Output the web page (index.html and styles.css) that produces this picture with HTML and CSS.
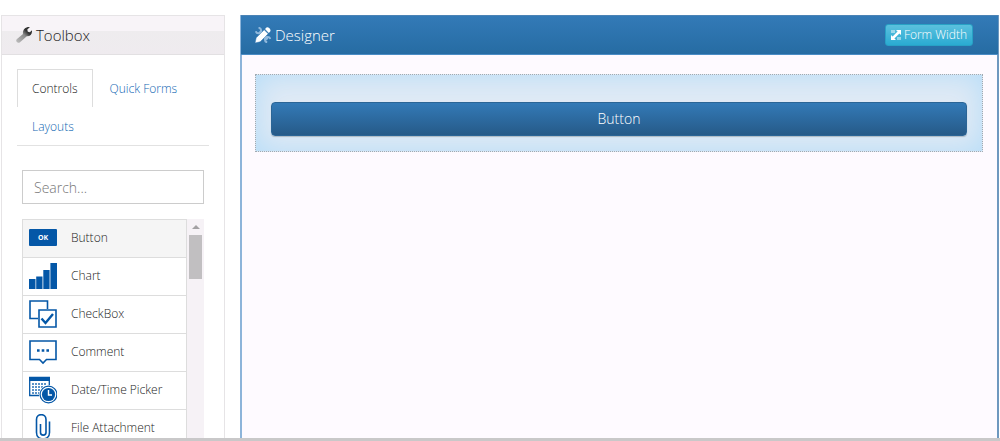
FILE: index.html
```html
<!DOCTYPE html>
<html lang="en">
<head>
	<meta charset="UTF-8">
	<meta name="viewport" content="width=device-width, initial-scale=1.0">
	<link rel="stylesheet" href="styles.css">
	<title>Form Designer</title>
</head>
<body>
	<div class="app">
		<aside class="panel toolbox">
			<header class="panel-heading">
				<svg class="icon" viewBox="0 0 16 16" aria-hidden="true">
					<defs>
						<linearGradient id="steel" x1="0" y1="1" x2="1" y2="0">
							<stop offset="0.1" stop-color="#b5b5b5"/>
							<stop offset="0.5" stop-color="#8c8c8c"/>
							<stop offset="0.7" stop-color="#333"/>
						</linearGradient>
					</defs>
					<path fill="url(#steel)" d="M.7 12.300 7 7C6.400 4 8 .9 11.200.2c1-.3 2-.3 2.600 0L11.300 2.600l.5 2.100 2.100.5 2-1.900c.6 3.400-1.400 6.100-5.100 5.900L4 15.200C1.800 17-.9 14.300.7 12.300z"/>
				</svg>
				<h2>Toolbox</h2>
			</header>
			<div class="toolbox-body">
				<nav class="tabs">
					<a class="tab active" href="#controls">Controls</a>
					<a class="tab" href="#quick-forms">Quick Forms</a>
					<a class="tab" href="#layouts">Layouts</a>
				</nav>
				<div class="finder">
					<input class="search" type="text" placeholder="Search..." aria-label="Search controls">
					<div class="list">
						<ul class="items">
							<li class="item active">
								<svg viewBox="0 0 28 28" aria-hidden="true">
									<rect y="5" width="28" height="17" rx="1" fill="#0457a7"/>
									<text x="14" y="16" text-anchor="middle" class="ok">OK</text>
								</svg>
								<span>Button</span>
							</li>
							<li class="item">
								<svg viewBox="0 0 28 28" aria-hidden="true">
									<path fill="#0457a7" d="M0 17h6.500v10H0zM7.200 14.500h6.300V27H7.200zM14.300 8h6.300v19h-6.300zM21.400 1H28v26h-6.600z"/>
								</svg>
								<span>Chart</span>
							</li>
							<li class="item">
								<svg viewBox="0 0 28 28" class="line" aria-hidden="true">
									<path d="M9 18.500H1V1h17.500v8"/>
									<path d="M10 10h17v17H10z"/>
									<path stroke-width="2.400" d="m12.500 18.500 4 4.500 7.500-9"/>
								</svg>
								<span>CheckBox</span>
							</li>
							<li class="item">
								<svg viewBox="0 0 28 28" class="line" aria-hidden="true">
									<path d="M1 3h26v18.500h-9.500L14 25l-3.500-3.500H1z"/>
									<path stroke-width="2.600" d="M8 12.500h2.600M12.700 12.500h2.600M17.400 12.500H20"/>
								</svg>
								<span>Comment</span>
							</li>
							<li class="item">
								<svg viewBox="0 0 28 28" aria-hidden="true">
									<path fill="none" stroke="#0457a7" stroke-width="1.300" d="M.7 1.500h19.600v18H.7z"/>
									<path fill="#0457a7" d="M0 1h21v4H0z"/>
									<path stroke="#5b93c8" stroke-width="2" stroke-dasharray="2 1" d="M3 8h15M3 11h15M3 14h15M3 17h9"/>
									<circle cx="19.500" cy="18.500" r="9.500" fill="#fff"/>
									<circle cx="19.500" cy="18.500" r="8.400" fill="#fff" stroke="#0457a7" stroke-width="1.200"/>
									<circle cx="19.500" cy="18.500" r="6.600" fill="#0457a7"/>
									<path fill="none" stroke="#fff" stroke-width="1.400" d="M19.500 14v5H23"/>
								</svg>
								<span>Date/Time Picker</span>
							</li>
							<li class="item">
								<svg viewBox="0 0 28 28" class="line" aria-hidden="true">
									<path d="M17 8v10.500c0 3.500-5.500 3.500-5.500 0V10M7.500 7.500v11c0 8.500 13 8.500 13 0v-11M7.500 8V5.500c0-6.500 9.500-6.500 9.500 0V9"/>
								</svg>
								<span>File Attachment</span>
							</li>
						</ul>
						<div class="scrollbar" aria-hidden="true">
							<span class="arrow"></span>
							<span class="thumb"></span>
						</div>
					</div>
				</div>
			</div>
		</aside>
		<main class="panel designer">
			<header class="panel-heading">
				<svg class="icon" viewBox="0 0 16 16" aria-hidden="true">
					<path fill="none" stroke="#8fb8dc" stroke-width="2.600" d="m4.500 4.500 8 8"/>
					<path fill="none" stroke="#8fb8dc" stroke-width="2" d="M3.500.8a2.700 2.700 0 1 1-2.700 3.400M15.300 12a2.700 2.700 0 1 0-3.100 3.300"/>
					<path fill="#fff" stroke="#2f74b1" stroke-width=".5" d="M0 16l1.200-5.200 8-8 4 4-8 8z"/>
					<path fill="#fff" d="m10 2 1.300-1.300c1.600-1.600 5.400 2 3.900 3.800L13.800 6z"/>
				</svg>
				<h2>Designer</h2>
				<button class="btn-info" type="button">
					<svg viewBox="0 0 10 10" aria-hidden="true">
						<path fill="#fff" opacity=".45" d="M0 0h4v3H0zM6 7h4v3H6z"/>
						<path fill="#fff" d="M5 0h5v5L8.400 3.400 3.400 8.400 5 10H0V5l1.600 1.600 5-5z"/>
					</svg>
					Form Width
				</button>
			</header>
			<div class="canvas">
				<div class="selected">
					<button class="btn-primary" type="button">Button</button>
				</div>
			</div>
		</main>
	</div>
</body>
</html>
```
FILE: styles.css
```css
* {
	box-sizing: border-box;
}
body {
	margin: 0;
	background: #fff;
	color: #222;
	font: 300 12px/18px "Open Sans", "Noto Sans", sans-serif;
}
button, input {
	font: inherit;
}
h2 {
	margin: 0;
	font-size: 15px;
	font-weight: 300;
	line-height: 20px;
}
.app {
	display: flex;
	gap: 15px;
	height: 100vh;
	padding: 15px 1px 0;
	border-bottom: 3px solid #c9c8c9;
	overflow: hidden;
}
.panel {
	display: flex;
	flex-direction: column;
	min-height: 0;
}
.panel-heading {
	display: flex;
	flex: none;
	align-items: center;
	gap: 4px;
	height: 40px;
	padding: 0 14px;
}
.icon {
	width: 16px;
	height: 16px;
}

/* toolbox */
.toolbox {
	flex: 0 0 224px;
	border: 1px solid #e6e4e6;
	border-bottom: 0;
}
.toolbox .panel-heading {
	height: 39px;
	border-bottom: 1px solid #e2e0e2;
	background: linear-gradient(#f8f4f8 40%, #eeecee 40%, #efebef);
}
.toolbox-body {
	display: flex;
	flex: 1;
	flex-direction: column;
	min-height: 0;
	padding: 14px 15px 0;
}
.tabs {
	display: flex;
	flex: none;
	flex-wrap: wrap;
	column-gap: 2px;
	border-bottom: 1px solid #e2e2e2;
}
.tab {
	height: 38px;
	padding: 10px 14px;
	border: 1px solid transparent;
	color: #1268b3;
	line-height: 18px;
	text-decoration: none;
}
.tab.active {
	border-color: #ddd;
	border-bottom: 0;
	color: #222;
}
.finder {
	display: flex;
	flex: 1;
	flex-direction: column;
	gap: 15px;
	min-height: 0;
	padding: 24px 5px 0;
}
.search {
	flex: none;
	width: 100%;
	height: 34px;
	padding: 0 11px;
	border: 1px solid #ccc;
	background: #fff;
	color: #555;
	font-size: 14px;
}
.search::placeholder {
	color: #777;
	opacity: 1;
}
.list {
	display: flex;
	flex: 1;
	min-height: 0;
	overflow: hidden;
}
.items {
	flex: 1;
	margin: 0;
	padding: 0;
	border: 1px solid #ddd;
	border-bottom: 0;
	list-style: none;
}
.item {
	display: flex;
	align-items: center;
	gap: 14px;
	height: 38px;
	padding: 0 6px 1px;
	border-bottom: 1px solid #ddd;
	white-space: nowrap;
}
.item.active {
	background: #f5f5f5;
}
.item svg {
	flex: none;
	width: 28px;
	height: 28px;
}
.line {
	fill: none;
	stroke: #0457a7;
	stroke-width: 1.6;
}
.ok {
	fill: #fff;
	font-size: 7px;
	font-weight: 700;
}
.scrollbar {
	display: flex;
	flex: 0 0 17px;
	flex-direction: column;
	align-items: center;
	background: #f6f2f6;
}
.arrow {
	margin: 6px 0;
	border: 4px solid transparent;
	border-top: 0;
	border-bottom-color: #a3a1a3;
}
.thumb {
	width: 13px;
	height: 44px;
	background: #c1bfc1;
}

/* designer */
.designer {
	flex: 1;
	min-width: 0;
	border: 2px solid #8db4da;
	border-top: 0;
	border-right-color: #6e98bf;
	border-bottom: 0;
	background: #fefaff;
}
.designer .panel-heading {
	margin: 0 -1px;
	border-top: 1px solid #4b83b5;
	border-bottom: 1px solid #4a8cc5;
	background: linear-gradient(#337ab7, #266ca3);
	color: #fff;
}
.btn-info {
	display: flex;
	align-items: center;
	gap: 3px;
	height: 22px;
	margin-left: auto;
	margin-right: 11px;
	padding: 0 5px;
	border: 1px solid #28a1c5;
	border-radius: 3px;
	background: linear-gradient(#5bc0de, #2aabd2);
	color: #fff;
	white-space: nowrap;
}
.btn-info svg {
	width: 10px;
	height: 10px;
}
.canvas {
	padding: 19px 14px 19px 13px;
}
.selected {
	padding: 27px 15px 15px;
	border: 1px dotted #a0aab2;
	background: #e0eaf5;
	box-shadow: inset 0 0 30px #b4dcf8;
}
.btn-primary {
	display: block;
	width: 100%;
	height: 34px;
	border: 1px solid #2b6596;
	border-radius: 4px;
	background: linear-gradient(#337ab7, #265a88);
	box-shadow: 0 1px 1px rgba(0, 0, 0, 0.2);
	color: #fff;
	font-size: 14px;
}
```
